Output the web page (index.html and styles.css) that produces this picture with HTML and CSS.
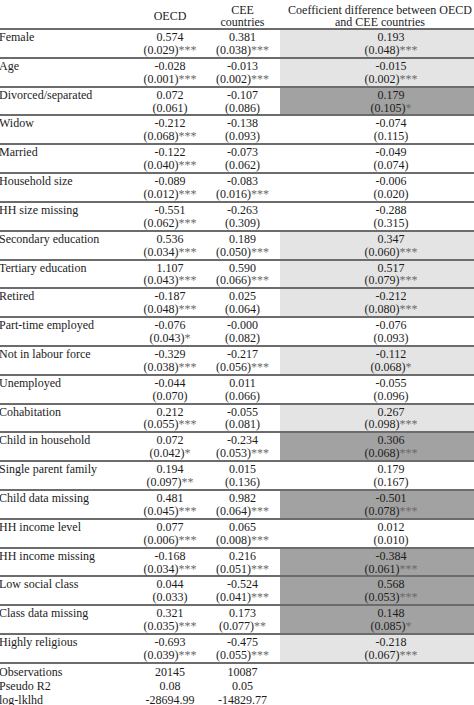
FILE: index.html
```html
<!DOCTYPE html>
<html>
<head>
<meta charset="utf-8">
<link rel="stylesheet" href="styles.css">
</head>
<body>
<table class="tbl">
<colgroup><col class="c-lab"><col class="c-oecd"><col class="c-cee"><col class="c-diff"></colgroup>
<thead>
<tr class="hd"><th></th><th>OECD</th><th>CEE<br>countries</th><th class="hdiff">Coefficient difference between OECD<br>and CEE countries</th></tr>
</thead>
<tbody>
<tr><td class="lab">Female</td><td>0.574<br>(0.029)<span class="st">***</span></td><td>0.381<br>(0.038)<span class="st">***</span></td><td class="lt">0.193<br>(0.048)<span class="st">***</span></td></tr>
<tr><td class="lab">Age</td><td>-0.028<br>(0.001)<span class="st">***</span></td><td>-0.013<br>(0.002)<span class="st">***</span></td><td class="lt">-0.015<br>(0.002)<span class="st">***</span></td></tr>
<tr><td class="lab">Divorced/separated</td><td>0.072<br>(0.061)</td><td>-0.107<br>(0.086)</td><td class="dk">0.179<br>(0.105)<span class="st">*</span></td></tr>
<tr><td class="lab">Widow</td><td>-0.212<br>(0.068)<span class="st">***</span></td><td>-0.138<br>(0.093)</td><td>-0.074<br>(0.115)</td></tr>
<tr><td class="lab">Married</td><td>-0.122<br>(0.040)<span class="st">***</span></td><td>-0.073<br>(0.062)</td><td>-0.049<br>(0.074)</td></tr>
<tr><td class="lab">Household size</td><td>-0.089<br>(0.012)<span class="st">***</span></td><td>-0.083<br>(0.016)<span class="st">***</span></td><td>-0.006<br>(0.020)</td></tr>
<tr><td class="lab">HH size missing</td><td>-0.551<br>(0.062)<span class="st">***</span></td><td>-0.263<br>(0.309)</td><td>-0.288<br>(0.315)</td></tr>
<tr><td class="lab">Secondary education</td><td>0.536<br>(0.034)<span class="st">***</span></td><td>0.189<br>(0.050)<span class="st">***</span></td><td class="lt">0.347<br>(0.060)<span class="st">***</span></td></tr>
<tr><td class="lab">Tertiary education</td><td>1.107<br>(0.043)<span class="st">***</span></td><td>0.590<br>(0.066)<span class="st">***</span></td><td class="lt">0.517<br>(0.079)<span class="st">***</span></td></tr>
<tr><td class="lab">Retired</td><td>-0.187<br>(0.048)<span class="st">***</span></td><td>0.025<br>(0.064)</td><td class="lt">-0.212<br>(0.080)<span class="st">***</span></td></tr>
<tr><td class="lab">Part-time employed</td><td>-0.076<br>(0.043)<span class="st">*</span></td><td>-0.000<br>(0.082)</td><td>-0.076<br>(0.093)</td></tr>
<tr><td class="lab">Not in labour force</td><td>-0.329<br>(0.038)<span class="st">***</span></td><td>-0.217<br>(0.056)<span class="st">***</span></td><td class="lt">-0.112<br>(0.068)<span class="st">*</span></td></tr>
<tr><td class="lab">Unemployed</td><td>-0.044<br>(0.070)</td><td>0.011<br>(0.066)</td><td>-0.055<br>(0.096)</td></tr>
<tr><td class="lab">Cohabitation</td><td>0.212<br>(0.055)<span class="st">***</span></td><td>-0.055<br>(0.081)</td><td class="lt">0.267<br>(0.098)<span class="st">***</span></td></tr>
<tr><td class="lab">Child in household</td><td>0.072<br>(0.042)<span class="st">*</span></td><td>-0.234<br>(0.053)<span class="st">***</span></td><td class="dk">0.306<br>(0.068)<span class="st">***</span></td></tr>
<tr><td class="lab">Single parent family</td><td>0.194<br>(0.097)<span class="st">**</span></td><td>0.015<br>(0.136)</td><td>0.179<br>(0.167)</td></tr>
<tr><td class="lab">Child data missing</td><td>0.481<br>(0.045)<span class="st">***</span></td><td>0.982<br>(0.064)<span class="st">***</span></td><td class="dk">-0.501<br>(0.078)<span class="st">***</span></td></tr>
<tr><td class="lab">HH income level</td><td>0.077<br>(0.006)<span class="st">***</span></td><td>0.065<br>(0.008)<span class="st">***</span></td><td>0.012<br>(0.010)</td></tr>
<tr><td class="lab">HH income missing</td><td>-0.168<br>(0.034)<span class="st">***</span></td><td>0.216<br>(0.051)<span class="st">***</span></td><td class="dk">-0.384<br>(0.061)<span class="st">***</span></td></tr>
<tr><td class="lab">Low social class</td><td>0.044<br>(0.033)</td><td>-0.524<br>(0.041)<span class="st">***</span></td><td class="dk">0.568<br>(0.053)<span class="st">***</span></td></tr>
<tr><td class="lab">Class data missing</td><td>0.321<br>(0.035)<span class="st">***</span></td><td>0.173<br>(0.077)<span class="st">**</span></td><td class="dk">0.148<br>(0.085)<span class="st">*</span></td></tr>
<tr><td class="lab">Highly religious</td><td>-0.693<br>(0.039)<span class="st">***</span></td><td>-0.475<br>(0.055)<span class="st">***</span></td><td class="lt">-0.218<br>(0.067)<span class="st">***</span></td></tr>
<tr class="stat first"><td class="lab">Observations</td><td>20145</td><td>10087</td><td></td></tr>
<tr class="stat"><td class="lab">Pseudo R2</td><td>0.08</td><td>0.05</td><td></td></tr>
<tr class="stat"><td class="lab">log-lklhd</td><td>-28694.99</td><td>-14829.77</td><td></td></tr>
</tbody>
</table>
</body>
</html>
```
FILE: styles.css
```css
html, body {
  margin: 0;
  padding: 0;
  overflow: hidden;
  background: #ffffff;
}
body {
  font-family: "Liberation Serif", "Times New Roman", serif;
  font-size: 12px;
  color: #1c1c1c;
}
.tbl {
  border-collapse: collapse;
  table-layout: fixed;
  width: 503px;
  margin-left: -1px;
}
.c-lab { width: 136px; }
.c-oecd { width: 70px; }
.c-cee { width: 75px; }
.c-diff { width: 222px; }
.tbl th {
  font-weight: normal;
  text-align: center;
  vertical-align: middle;
  line-height: 12px;
  padding: 4px 0 0 0;
  height: 24px;
  border-bottom: 2px solid #6c6c6c;
}
.tbl th.hdiff {
  padding-right: 22px;
  white-space: nowrap;
}
.tbl td {
  text-align: center;
  vertical-align: top;
  line-height: 12.9px;
  padding: 1px 0 0 0;
  border-bottom: 2px solid #6c6c6c;
  white-space: nowrap;
}
.tbl td.lab {
  text-align: left;
}
.tbl td.lt { background: #e4e4e4; }
.tbl td.dk { background: #a2a2a2; }
.st { color: #6a6a6a; }
.tbl tr.stat td {
  border-bottom: none;
  line-height: 14px;
  padding: 0;
}
.tbl tr.stat.first td {
  padding-top: 1px;
}
```
